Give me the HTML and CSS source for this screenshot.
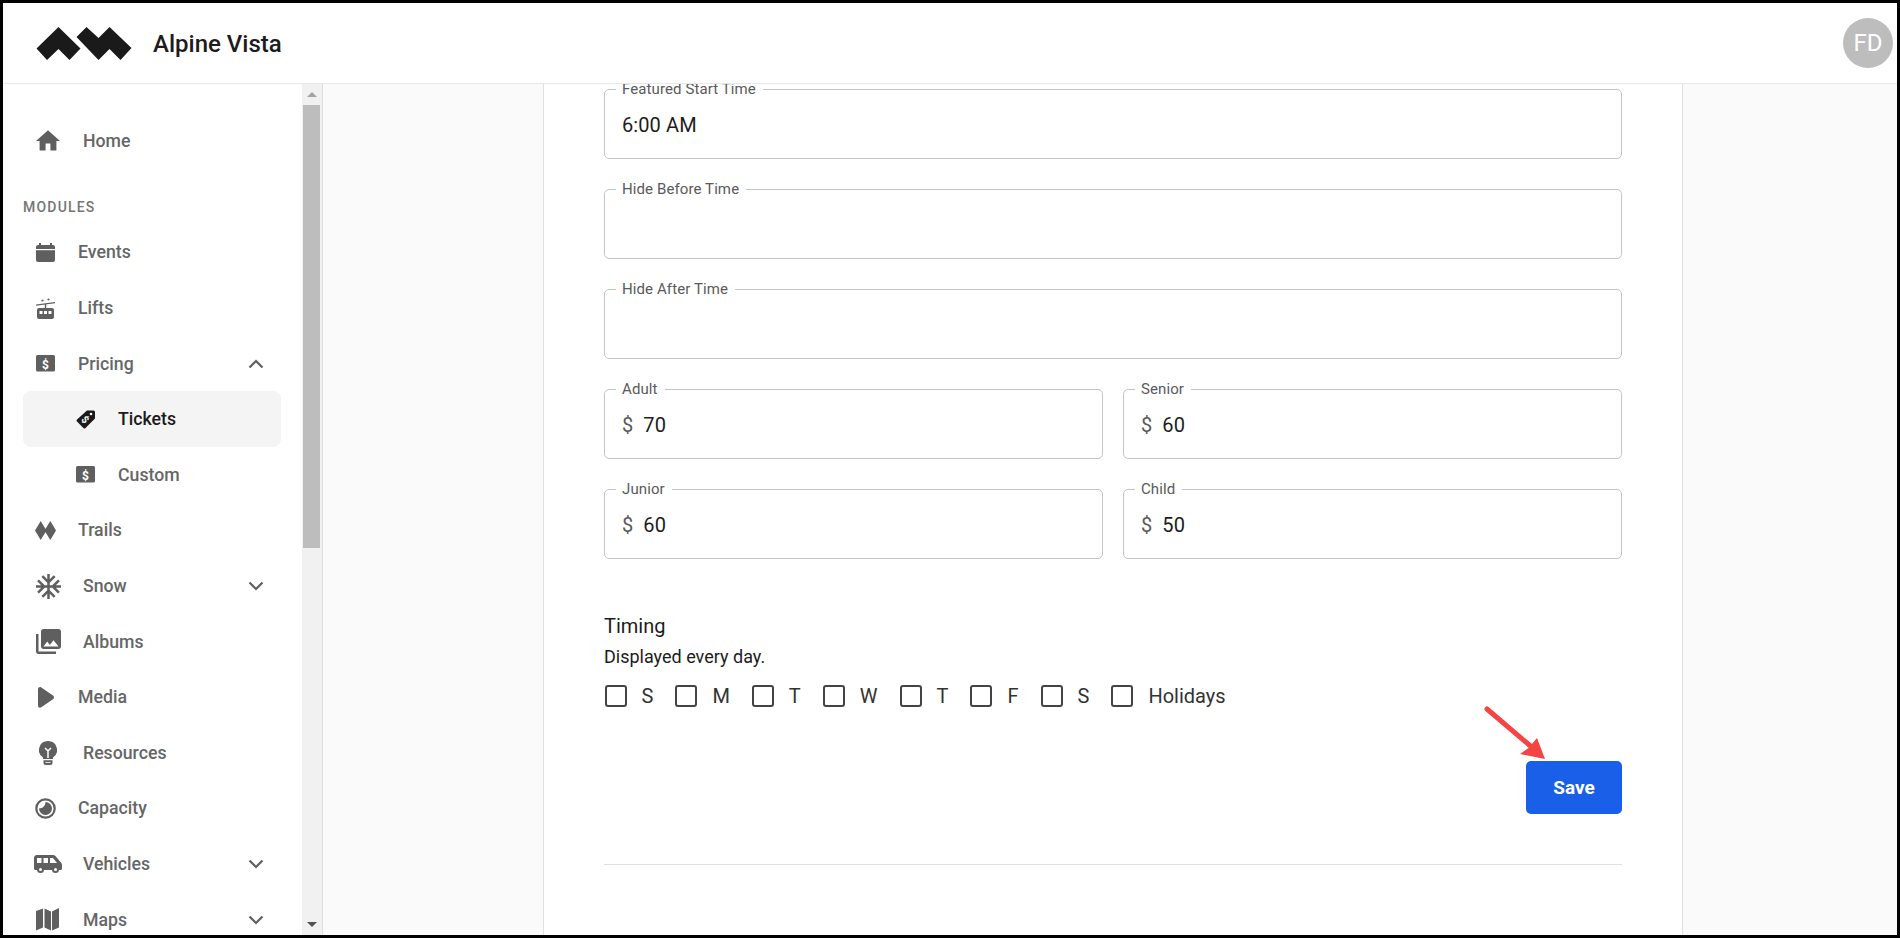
FILE: index.html
```html
<!DOCTYPE html>
<html lang="en">
<head>
<meta charset="utf-8">
<title>Alpine Vista</title>
<link rel="stylesheet" href="styles.css">
</head>
<body>
<div class="frame">
  <header class="topbar">
    <svg class="logo" viewBox="0 0 96 34" aria-hidden="true"><path d="M0 21.500 22 0 44 21.500 33 33 22 22 10.500 33Z"/><path d="M40 10 50 0 62 11 73 0 95 21 84 33 73 22 62 33Z"/></svg>
    <span class="brand">Alpine Vista</span>
    <span class="avatar">FD</span>
  </header>
  <div class="body">
    <aside class="sidebar">
      <nav class="nav">
        <a class="item first"><span class="slot wide"><svg class="i24" viewBox="2 2 20 20"><path d="M10 20v-6h4v6h5v-8h3L12 3 2 12h3v8z"/></svg></span>Home</a>
        <div class="section">MODULES</div>
        <a class="item"><span class="slot"><svg class="i19" viewBox="0 0 19 19"><path d="M3 0h2v2h9V0h2v2h1a2 2 0 0 1 2 2v13a2 2 0 0 1-2 2H2a2 2 0 0 1-2-2V4a2 2 0 0 1 2-2h1z"/><path class="cut" d="M0 6h19v1.200H0z"/></svg></span>Events</a>
        <a class="item"><span class="slot"><svg class="i-lift" viewBox="0 0 19 21"><path d="M0 6.500 19 4v1.300L0 7.800z"/><circle cx="6.500" cy="2.500" r="1.100"/><circle cx="12.500" cy="1.500" r="1.100"/><path d="M8.800 6h1.400v5H8.800z"/><rect x="1" y="10" width="17" height="11" rx="2"/><path class="cut" d="M3.500 13h3v3h-3zM8 13h3v3H8zM12.500 13h3v3h-3z"/></svg></span>Lifts</a>
        <a class="item"><span class="slot"><svg class="i19" viewBox="0 0 19 17"><rect width="19" height="16.500" rx="1.500"/><text class="glyph" x="9.500" y="13.500" text-anchor="middle">$</text></svg></span>Pricing<svg class="chev" viewBox="0 0 16 10"><path d="M1.500 8.500 8 2l6.500 6.500"/></svg></a>
        <a class="item sub active"><span class="slot"><svg class="i19" viewBox="0 0 19 19"><path d="M11 .5h6.500A1.500 1.500 0 0 1 19 2v6.500L9.500 18a1.500 1.500 0 0 1-2.100 0L1 11.600a1.500 1.500 0 0 1 0-2.100z"/><circle class="cut" cx="15" cy="4" r="1.300"/><text class="glyph tiny" x="9" y="13" text-anchor="middle" transform="rotate(45 9 10)">$</text></svg></span>Tickets</a>
        <a class="item sub"><span class="slot"><svg class="i19" viewBox="0 0 19 17"><rect width="19" height="16.500" rx="1.500"/><text class="glyph" x="9.500" y="13.500" text-anchor="middle">$</text></svg></span>Custom</a>
        <a class="item"><span class="slot"><svg class="i21" viewBox="0 0 21 19"><path d="M5.700 0 11.500 9.500 5.700 19 0 9.500zM15.300 0 21 9.500 15.300 19 9.500 9.500z"/></svg></span>Trails</a>
        <a class="item"><span class="slot wide"><svg class="i25" viewBox="2 2 20 20"><path d="M22 11h-4.170l3.240-3.240-1.410-1.420L15 11h-2V9l4.660-4.660-1.420-1.410L13 6.170V2h-2v4.170L7.760 2.930 6.340 4.340 11 9v2H9L4.340 6.340 2.930 7.760 6.170 11H2v2h4.170l-3.240 3.240 1.410 1.420L9 13h2v2l-4.660 4.660 1.420 1.410L11 17.830V22h2v-4.170l3.240 3.240 1.420-1.410L13 15v-2h2l4.660 4.660 1.410-1.420L17.830 13H22z"/></svg></span>Snow<svg class="chev" viewBox="0 0 16 10"><path d="M1.500 1.500 8 8l6.500-6.500"/></svg></a>
        <a class="item"><span class="slot wide"><svg class="i25" viewBox="2 2 20 20"><path d="M22 16V4c0-1.100-.9-2-2-2H8c-1.100 0-2 .9-2 2v12c0 1.100.9 2 2 2h12c1.100 0 2-.9 2-2zm-11-4 2.030 2.710L16 11l4 5H8l3-4zM2 6v14c0 1.100.9 2 2 2h14v-2H4V6H2z"/></svg></span>Albums</a>
        <a class="item"><span class="slot"><svg class="i-media" viewBox="0 0 16 21"><path d="M0 2.200C0 .4 1.900-.6 3.300.5l11.700 8c1.300 1 1.300 2.800 0 3.800l-11.700 8C1.900 21.400 0 20.500 0 18.800z"/></svg></span>Media</a>
        <a class="item"><span class="slot wide"><svg class="i-bulb" viewBox="0 0 18 24"><path d="M9 0a9 9 0 0 1 5 16.500V18H4v-1.500A9 9 0 0 1 9 0z"/><path d="M4.500 19.200h9V22a2 2 0 0 1-2 2h-5a2 2 0 0 1-2-2z"/><path class="cutline" d="M6 7l3 3 3-3M9 10v7"/><path class="cut" d="M6.500 21h5v.8h-5z"/></svg></span>Resources</a>
        <a class="item"><span class="slot"><svg class="i21" viewBox="0 0 21 21"><circle class="ring" cx="10.500" cy="10.500" r="9.200"/><path d="M10.500 4a6.500 6.500 0 1 1-6.500 6.500c3.600 0 6.500-2.900 6.500-6.500z"/></svg></span>Capacity</a>
        <a class="item"><span class="slot wide van"><svg class="i-van" viewBox="0 0 28 18"><path d="M3 0h16c1 0 1.800.4 2.400 1.100L27 7.500c.6.700 1 1.500 1 2.500v3.500c0 .8-.7 1.500-1.500 1.500H1.500C.7 15 0 14.300 0 13.500V3c0-1.700 1.300-3 3-3z"/><path class="cut" d="M3 3h4.500v5H3zM9.500 3H14v5H9.500zM16 3h3l4 5h-7z"/><circle cx="6.500" cy="14.500" r="3.500"/><circle cx="21.500" cy="14.500" r="3.500"/><circle class="cut" cx="6.500" cy="14.500" r="1.500"/><circle class="cut" cx="21.500" cy="14.500" r="1.500"/></svg></span>Vehicles<svg class="chev" viewBox="0 0 16 10"><path d="M1.500 1.500 8 8l6.500-6.500"/></svg></a>
        <a class="item"><span class="slot wide"><svg class="i-map" viewBox="0 0 23 23"><path d="M0 3 7 .5v19L0 22.500zM8.500 .5l6.500 3v19l-6.500-3zM16 3.500 23 0v19.500l-7 3z"/></svg></span>Maps<svg class="chev" viewBox="0 0 16 10"><path d="M1.500 1.500 8 8l6.500-6.500"/></svg></a>
      </nav>
      <div class="scrollbar">
        <span class="sb-up"></span>
        <span class="sb-thumb"></span>
        <span class="sb-rest"></span>
        <span class="sb-down"></span>
      </div>
    </aside>
    <main class="main">
      <section class="card">
        <fieldset class="field"><legend>Featured Start Time</legend><div class="val">6:00 AM</div></fieldset>
        <fieldset class="field"><legend>Hide Before Time</legend><div class="val"></div></fieldset>
        <fieldset class="field"><legend>Hide After Time</legend><div class="val"></div></fieldset>
        <div class="pair">
          <fieldset class="field"><legend>Adult</legend><div class="val"><span class="cur">$</span>70</div></fieldset>
          <fieldset class="field"><legend>Senior</legend><div class="val"><span class="cur">$</span>60</div></fieldset>
        </div>
        <div class="pair">
          <fieldset class="field"><legend>Junior</legend><div class="val"><span class="cur">$</span>60</div></fieldset>
          <fieldset class="field"><legend>Child</legend><div class="val"><span class="cur">$</span>50</div></fieldset>
        </div>
        <h3 class="timing">Timing</h3>
        <p class="note">Displayed every day.</p>
        <div class="days">
          <label class="day"><span class="box"></span>S</label>
          <label class="day"><span class="box"></span>M</label>
          <label class="day"><span class="box"></span>T</label>
          <label class="day"><span class="box"></span>W</label>
          <label class="day"><span class="box"></span>T</label>
          <label class="day"><span class="box"></span>F</label>
          <label class="day"><span class="box"></span>S</label>
          <label class="day"><span class="box"></span>Holidays</label>
        </div>
        <div class="actions">
          <button class="save">Save</button>
          <svg class="arrow" viewBox="0 0 64 56"><path class="shaft" d="M3 3 50 43"/><path class="head" d="M61 53 36 48 44.500 42 53 32z"/></svg>
        </div>
        <hr class="rule">
      </section>
    </main>
  </div>
</div>
</body>
</html>
```

FILE: styles.css
```css
* { box-sizing: border-box; }
html, body { margin: 0; height: 100%; overflow: hidden; }
body { font-family: Roboto, "Liberation Sans", sans-serif; color: #1c1c1c; background: #000; }

.frame { height: 938px; border: 3px solid #000; display: flex; flex-direction: column; background: #fff; }

.topbar { height: 81px; flex: none; display: flex; align-items: center; padding-left: 33px; background: #fff; border-bottom: 1px solid #e8e8e8; }
.logo { width: 97px; height: 34px; fill: #1a1a1a; flex: none; margin-top: 2px; }
.brand { margin-left: 20px; margin-top: 1px; font-size: 24px; font-weight: 500; color: #1c1c1c; }
.avatar { margin-left: auto; margin-right: 4px; width: 50px; height: 50px; border-radius: 50%; background: #bdbdbd; color: #fff; display: flex; align-items: center; justify-content: center; font-size: 24px; }

.body { flex: 1; min-height: 0; display: flex; }

.sidebar { width: 320px; flex: none; display: flex; background: #fff; border-right: 1px solid #dedede; }
.nav { flex: 1; min-width: 0; overflow: hidden; padding: 0 21px 0 20px; }
.item { height: 55.6px; display: flex; align-items: center; padding-left: 13px; font-size: 17.700px; font-weight: 500; color: #666; border-radius: 8px; }
.item.first { margin-top: 29.500px; }
.item.sub { padding-left: 53px; }
.item.active { background: #f4f4f4; color: #1a1a1a; }
.item.active svg { fill: #1a1a1a; }
.section { padding: 27.500px 0 8.100px; line-height: 20px; font-size: 14px; font-weight: 500; letter-spacing: 1.200px; color: #757575; }

.slot { flex: none; width: 42px; display: flex; align-items: center; }
.slot.wide { width: 47px; }
.slot.van { margin-left: -2px; width: 49px; }
.slot svg { fill: #5f5f5f; display: block; }
.i19 { width: 19px; height: 19px; }
.i-lift { width: 19px; height: 21px; }
.i21 { width: 21px; height: 21px; margin-left: -1px; }
.i24 { width: 24px; height: 24px; }
.i25 { width: 25px; height: 25px; }
.i-media { width: 16px; height: 21px; margin-left: 2px; }
.i-bulb { width: 18px; height: 24px; margin-left: 3px; }
.i-van { width: 28px; height: 18px; }
.i-map { width: 23px; height: 23px; }
.cut { fill: #fff; }
.cutline { fill: none; stroke: #fff; stroke-width: 1.500; }
.ring { fill: none; stroke: #5f5f5f; stroke-width: 2.200; }
.glyph { fill: #fff; font-family: Roboto, sans-serif; font-size: 12px; font-weight: 700; }
.glyph.tiny { font-size: 10px; }
.chev { width: 16px; height: 10px; margin-left: auto; margin-right: 17px; fill: none; stroke: #5f5f5f; stroke-width: 2.200; }

.scrollbar { width: 20px; flex: none; background: #f1f1f1; display: flex; flex-direction: column; align-items: center; padding: 0 1px 0 0; }
.sb-up, .sb-down { flex: none; height: 21px; width: 17px; display: flex; align-items: center; justify-content: center; }
.sb-up::before { content: ""; border: 5px solid transparent; border-top: 0; border-bottom: 5px solid #a3a3a3; }
.sb-down::before { content: ""; border: 5px solid transparent; border-bottom: 0; border-top: 5px solid #505050; }
.sb-thumb { flex: none; width: 17px; height: 443px; background: #bdbdbd; }
.sb-rest { flex: 1; }

.main { flex: 1; min-width: 0; overflow: hidden; background: #fafafa; padding-left: 220px; }
.card { position: relative; width: 1140px; height: 860px; margin-top: -3px; padding: 0 60px; background: #fff; border: 1px solid #e0e0e0; border-top: 0; border-radius: 0 0 6px 6px; }

.field { display: block; margin: 0 0 22px; padding: 0 17px; height: 78px; min-width: 0; border: 1px solid #c4c4c4; border-radius: 5px; }
.field legend { padding: 0 7px 0 6px; margin-left: -6px; font-size: 15px; line-height: 17px; letter-spacing: .1px; color: #5a5a5a; }
.val { height: 54px; display: flex; align-items: center; font-size: 20px; letter-spacing: .1px; color: #1c1c1c; }
.cur { margin-right: 10px; color: #5a5a5a; }
.pair { display: grid; grid-template-columns: 1fr 1fr; gap: 20px; }

.timing { margin: 33px 0 0; font-size: 20px; line-height: 24px; font-weight: 400; }
.note { margin: 8px 0 0; font-size: 18px; line-height: 22px; }
.days { display: flex; gap: 22px; margin-top: 16px; margin-left: .5px; font-size: 20px; }
.day { display: flex; align-items: center; gap: 15px; color: #333; }
.box { width: 22px; height: 22px; border: 2px solid #444; border-radius: 3px; }

.actions { position: relative; display: flex; justify-content: flex-end; margin-top: 53px; }
.save { width: 96px; height: 53px; border: 0; border-radius: 5px; background: #1a5fe8; color: #fff; font: 700 19px Roboto, sans-serif; }
.arrow { position: absolute; right: 74px; top: -55px; width: 64px; height: 56px; }
.shaft { fill: none; stroke: #f44444; stroke-width: 5; stroke-linecap: round; }
.head { fill: #f44444; }
.rule { margin: 50px 0 0; border: 0; border-top: 1px solid #e0e0e0; }
```
